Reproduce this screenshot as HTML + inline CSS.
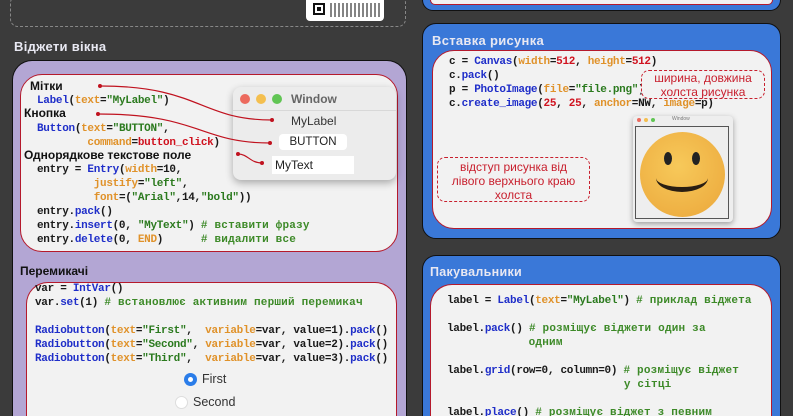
<!DOCTYPE html>
<html><head><meta charset="utf-8"><style>
*{margin:0;padding:0;box-sizing:border-box}
html{width:793px;height:416px;overflow:hidden}
body{width:793px;height:416px;background:#3b3b3b;position:relative;overflow:hidden;font-family:"Liberation Sans","DejaVu Sans",sans-serif}
.a{position:absolute}
.code{position:absolute;font-family:"Liberation Mono",monospace;font-size:11px;line-height:14px;font-weight:bold;color:#1a1a1a;white-space:pre;letter-spacing:-0.3px}
.k{color:#1f2ec9}.o{color:#e0922a}.s{color:#2b7a1e}.c{color:#3d8a28;letter-spacing:0.2px}.r{color:#d0121f}
.h{position:absolute;font-weight:900;font-size:13px;color:#e8e8f2;letter-spacing:0.3px}
.lab{position:absolute;font-weight:900;font-size:12px;color:#111}
.inner{position:absolute;background:#f2f2f2;border:1.5px solid #b51a2c;border-radius:22px}
.cut{border-bottom:none;border-bottom-left-radius:0;border-bottom-right-radius:0}
.note{position:absolute;border:1.5px dashed #c8202e;border-radius:8px;color:#c8202e;font-size:12px;text-align:center;line-height:14px}
</style></head><body>
<div class="a" style="left:10px;top:-5px;width:396px;height:32px;border:1px dashed #888;border-radius:8px"></div>
<div class="a" style="left:306px;top:0;width:78px;height:21px;background:#fff;border-radius:0 0 4px 4px"></div>
<div class="a" style="left:313px;top:3px;width:12px;height:12px;border:2px solid #111;background:#fff"><div style="margin:2px;width:4px;height:4px;background:#111"></div></div>
<div class="a" style="left:330px;top:3px;width:50px;height:14px;background:repeating-linear-gradient(90deg,#333 0 2px,#fff 2px 4px),#333;opacity:.6"></div>

<div class="h" style="left:14px;top:39px">Віджети вікна</div>
<div class="a cut" style="left:12px;top:60px;width:395px;height:356px;background:#b3a6d4;border:1.5px solid #111;border-radius:20px;border-bottom:none;border-bottom-left-radius:0;border-bottom-right-radius:0"></div>
<div class="inner" style="left:20px;top:74px;width:378px;height:178px"></div>
<div class="lab" style="left:30px;top:79px">Мітки</div>
<div class="code" style="left:37px;top:94px"><span class="k">Label</span>(<span class="o">text</span>=<span class="s">"MyLabel"</span>)</div>
<div class="lab" style="left:24px;top:106px">Кнопка</div>
<div class="code" style="left:37px;top:122px"><span class="k">Button</span>(<span class="o">text</span>=<span class="s">"BUTTON"</span>,
        <span class="o">command</span>=<span class="r">button_click</span>)</div>
<div class="lab" style="left:24px;top:148px">Однорядкове текстове поле</div>
<div class="code" style="left:37px;top:163px">entry = <span class="k">Entry</span>(<span class="o">width</span>=10,
         <span class="o">justify</span>=<span class="s">"left"</span>,
         <span class="o">font</span>=(<span class="s">"Arial"</span>,14,<span class="s">"bold"</span>))
entry.<span class="k">pack</span>()
entry.<span class="k">insert</span>(0, <span class="s">"MyText"</span>) <span class="c"># вставити фразу</span>
entry.<span class="k">delete</span>(0, <span class="o">END</span>)      <span class="c"># видалити все</span></div>

<div class="a" style="left:233px;top:87px;width:163px;height:93px;background:#ececec;border-radius:8px;box-shadow:0 3px 8px rgba(0,0,0,.3)"></div>
<div class="a" style="left:233px;top:110px;width:163px;height:1px;background:#d8d8d8"></div>
<div class="a" style="left:240px;top:94px;width:10px;height:10px;border-radius:50%;background:#ec6a5e"></div>
<div class="a" style="left:256px;top:94px;width:10px;height:10px;border-radius:50%;background:#f4bf4f"></div>
<div class="a" style="left:272px;top:94px;width:10px;height:10px;border-radius:50%;background:#61c554"></div>
<div class="a" style="left:291px;top:92px;font-size:12px;font-weight:bold;color:#666">Window</div>
<div class="a" style="left:291px;top:114px;font-size:12px;color:#333">MyLabel</div>
<div class="a" style="left:279px;top:134px;width:68px;height:16px;background:#fff;border-radius:4px;font-size:11.5px;color:#222;text-align:center;line-height:16px">BUTTON</div>
<div class="a" style="left:272px;top:156px;width:82px;height:18px;background:#fff;font-size:12px;color:#222;padding-left:3px;line-height:18px">MyText</div>
<svg class="a" style="left:0;top:0" width="793" height="416">
<g fill="none" stroke="#c0121f" stroke-width="1.2">
<path d="M100 86 C200 86 200 120 272 120"/>
<path d="M98 114 C200 114 200 143 270 143"/>
<path d="M238 154 C248 154 250 163 262 163"/>
<path d="M562 72 L640 84 M634 70 L645 84"/>
<path d="M545 114 L514 157 L568 115 M514 157 L634 127"/>
<path d="M700 97 L695 127 M703 97 L729 172"/>
</g>
<g fill="#c0121f"><circle cx="100" cy="86" r="2"/><circle cx="272" cy="120" r="2"/><circle cx="98" cy="114" r="2"/><circle cx="270" cy="143" r="2"/><circle cx="238" cy="154" r="2"/><circle cx="262" cy="163" r="2"/>
<circle cx="562" cy="72" r="2"/><circle cx="632" cy="70" r="2"/><circle cx="545" cy="115" r="2"/><circle cx="566" cy="116" r="2"/><circle cx="635" cy="127" r="2"/><circle cx="695" cy="127" r="2"/><circle cx="729" cy="172" r="2"/></g>
</svg>

<div class="a" style="left:20px;top:264px;font-weight:900;font-size:12px;color:#111">Перемикачі</div>
<div class="inner cut" style="left:26px;top:282px;width:371px;height:134px"></div>
<div class="code" style="left:35px;top:282px">var = <span class="k">IntVar</span>()
var.<span class="k">set</span>(1) <span class="c"># встановлює активним перший перемикач</span>

<span class="k">Radiobutton</span>(<span class="o">text</span>=<span class="s">"First"</span>,  <span class="o">variable</span>=var, value=1).<span class="k">pack</span>()
<span class="k">Radiobutton</span>(<span class="o">text</span>=<span class="s">"Second"</span>, <span class="o">variable</span>=var, value=2).<span class="k">pack</span>()
<span class="k">Radiobutton</span>(<span class="o">text</span>=<span class="s">"Third"</span>,  <span class="o">variable</span>=var, value=3).<span class="k">pack</span>()</div>
<div class="a" style="left:184px;top:373px;width:13px;height:13px;border-radius:50%;background:#2b7de9"><div style="margin:4px;width:5px;height:5px;border-radius:50%;background:#fff"></div></div>
<div class="a" style="left:202px;top:372px;font-size:12.5px;color:#333">First</div>
<div class="a" style="left:175px;top:396px;width:13px;height:13px;border-radius:50%;background:#fff;border:1px solid #ddd"></div>
<div class="a" style="left:193px;top:395px;font-size:12.5px;color:#333">Second</div>

<div class="a" style="left:422px;top:0;width:359px;height:11px;background:#3a78d8;border:1.5px solid #111;border-top:none;border-radius:0 0 12px 12px"></div>
<div class="a" style="left:430px;top:0;width:343px;height:5px;background:#f2f2f2;border:1.5px solid #b51a2c;border-top:none;border-radius:0 0 8px 8px"></div>

<div class="a" style="left:422px;top:23px;width:359px;height:216px;background:#3a78d8;border:1.5px solid #111;border-radius:14px"></div>
<div class="h" style="left:432px;top:33px">Вставка рисунка</div>
<div class="inner" style="left:432px;top:50px;width:340px;height:179px"></div>
<div class="code" style="left:449px;top:55px">c = <span class="k">Canvas</span>(<span class="o">width</span>=<span class="r">512</span>, <span class="o">height</span>=<span class="r">512</span>)
c.<span class="k">pack</span>()
p = <span class="k">PhotoImage</span>(<span class="o">file</span>=<span class="s">"file.png"</span>)
c.<span class="k">create_image</span>(<span class="r">25</span>, <span class="r">25</span>, <span class="o">anchor</span>=NW, <span class="o">image</span>=p)</div>
<div class="note" style="left:641px;top:70px;width:124px;height:29px;background:#f2f2f2">ширина, довжина<br>холста рисунка</div>
<div class="note" style="left:437px;top:157px;width:153px;height:45px;padding-top:2px">відступ рисунка від<br>лівого верхнього краю<br>холста</div>
<div class="a" style="left:633px;top:116px;width:100px;height:106px;background:#eee;border-radius:4px;box-shadow:0 2px 6px rgba(0,0,0,.35)"></div>
<div class="a" style="left:637px;top:118px;width:4px;height:4px;border-radius:50%;background:#ec6a5e;box-shadow:7px 0 #f4bf4f,14px 0 #61c554"></div>
<div class="a" style="left:672px;top:116px;font-size:5px;color:#777">Window</div>
<div class="a" style="left:635px;top:126px;width:94px;height:93px;border:1.5px solid #555"></div>
<div class="a" style="left:640px;top:132px;width:85px;height:85px;border-radius:50%;background:radial-gradient(circle at 45% 40%,#f7c95a,#eba63a)"></div>
<div class="a" style="left:664px;top:152px;width:8px;height:13px;border-radius:50%;background:#222"></div>
<div class="a" style="left:692px;top:152px;width:8px;height:13px;border-radius:50%;background:#222"></div>
<div class="a" style="left:656px;top:164px;width:52px;height:28px;border-bottom:5px solid #2a1e12;border-radius:0 0 50% 50%"></div>

<div class="a" style="left:422px;top:255px;width:359px;height:161px;background:#3a78d8;border:1.5px solid #111;border-bottom:none;border-radius:14px 14px 0 0"></div>
<div class="h" style="left:430px;top:265px;font-size:12.5px">Пакувальники</div>
<div class="inner cut" style="left:430px;top:284px;width:342px;height:132px"></div>
<div class="code" style="left:447px;top:294px"><span>label = </span><span class="k">Label</span>(<span class="o">text</span>=<span class="s">"MyLabel"</span>) <span class="c"># приклад віджета</span>

label.<span class="k">pack</span>() <span class="c"># розміщує віджети один за</span>
<span class="c">            одним</span>

label.<span class="k">grid</span>(row=0, column=0) <span class="c"># розміщує віджет</span>
<span class="c">                          у сітці</span>

label.<span class="k">place</span>() <span class="c"># розміщує віджет з певним</span></div>
</body></html>
